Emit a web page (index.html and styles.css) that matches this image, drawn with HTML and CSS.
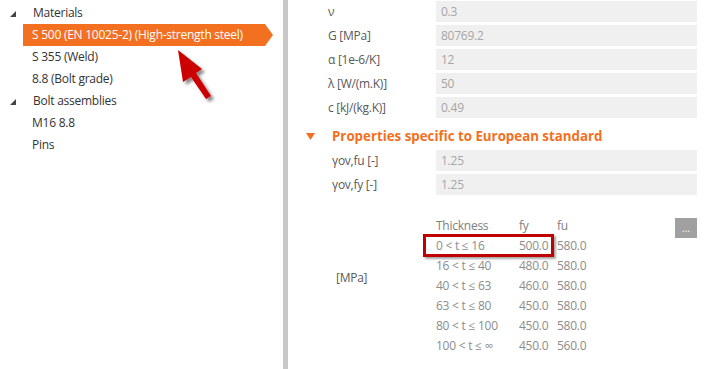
FILE: index.html
```html
<!DOCTYPE html>
<html>
<head>
<meta charset="utf-8">
<link rel="stylesheet" href="styles.css">
</head>
<body>
<div class="app">
  <aside class="tree">
    <div class="node group"><svg class="exp" width="6" height="6" viewBox="0 0 6 6"><polygon points="6,0 6,6 0,6"/></svg><span>Materials</span></div>
    <div class="node child selected"><span>S 500 (EN 10025-2) (High-strength steel)</span></div>
    <div class="node child"><span>S 355 (Weld)</span></div>
    <div class="node child"><span>8.8 (Bolt grade)</span></div>
    <div class="node group"><svg class="exp" width="6" height="6" viewBox="0 0 6 6"><polygon points="6,0 6,6 0,6"/></svg><span>Bolt assemblies</span></div>
    <div class="node child"><span>M16 8.8</span></div>
    <div class="node child"><span>Pins</span></div>
  </aside>
  <div class="divider"></div>
  <main class="props">
    <div class="fields">
      <div class="field"><span class="label">ν</span><span class="value">0.3</span></div>
      <div class="field"><span class="label">G [MPa]</span><span class="value">80769.2</span></div>
      <div class="field"><span class="label">α [1e-6/K]</span><span class="value">12</span></div>
      <div class="field"><span class="label">λ [W/(m.K)]</span><span class="value">50</span></div>
      <div class="field"><span class="label">c [kJ/(kg.K)]</span><span class="value">0.49</span></div>
    </div>
    <div class="section-head">
      <svg class="collapse" width="9" height="7" viewBox="0 0 9 7"><polygon points="0,0 9,0 4.5,7"/></svg>
      <span>Properties specific to European standard</span>
    </div>
    <div class="fields">
      <div class="field"><span class="label sub">γov,fu [-]</span><span class="value">1.25</span></div>
      <div class="field"><span class="label sub">γov,fy [-]</span><span class="value">1.25</span></div>
    </div>
    <div class="table-field">
      <span class="label mpa">[MPa]</span>
      <div class="table-wrap">
        <table class="grid">
          <tr><th>Thickness</th><th>fy</th><th>fu</th></tr>
          <tr><td>0 &lt; t ≤ 16</td><td>500.0</td><td>580.0</td></tr>
          <tr><td>16 &lt; t ≤ 40</td><td>480.0</td><td>580.0</td></tr>
          <tr><td>40 &lt; t ≤ 63</td><td>460.0</td><td>580.0</td></tr>
          <tr><td>63 &lt; t ≤ 80</td><td>450.0</td><td>580.0</td></tr>
          <tr><td>80 &lt; t ≤ 100</td><td>450.0</td><td>580.0</td></tr>
          <tr><td>100 &lt; t ≤ ∞</td><td>450.0</td><td>560.0</td></tr>
        </table>
        <div class="highlight-box"></div>
      </div>
      <button class="more">...</button>
    </div>
  </main>
  <svg class="callout" width="708" height="369" viewBox="0 0 708 369">
    <defs>
      <filter id="sh" x="-50%" y="-50%" width="200%" height="200%">
        <feGaussianBlur in="SourceAlpha" stdDeviation="1.5"/>
        <feOffset dx="3" dy="3" result="b"/>
        <feFlood flood-color="#000" flood-opacity="0.45"/>
        <feComposite in2="b" operator="in"/>
        <feMerge><feMergeNode/><feMergeNode in="SourceGraphic"/></feMerge>
      </filter>
    </defs>
    <polygon filter="url(#sh)" fill="#cc0000" points="178,50 202,69 196,73 211,96 206,99 191,77 183,82"/>
  </svg>
</div>
</body>
</html>
```

FILE: styles.css
```css
* { box-sizing: border-box; }
html, body { margin: 0; padding: 0; background: #fff; }
body {
  font-family: "Open Sans", "Noto Sans", sans-serif;
  font-size: 12px;
  letter-spacing: -0.25px;
  color: #333;
}
.app {
  position: relative;
  display: flex;
  width: 708px;
  height: 369px;
  overflow: hidden;
}
.tree {
  width: 283px;
  flex: none;
  padding-top: 2px;
}
.node {
  height: 22px;
  line-height: 22px;
  display: flex;
  align-items: center;
  white-space: nowrap;
  color: #333;
}
.node.group { padding-left: 10px; }
.node.group .exp { fill: #444; margin-right: 17px; margin-top: 1px; }
.node.child { padding-left: 23px; }
.node.child span { padding-left: 9px; }
.node.selected { width: 273px; }
.node.selected span {
  display: block;
  width: 250px;
  background: #f37021;
  color: #fff;
  clip-path: polygon(0 0, 242px 0, 250px 50%, 242px 100%, 0 100%);
}
.divider {
  width: 5px;
  flex: none;
  background: #c8c8c8;
}
.props {
  flex: 1;
  padding: 1px 11px 0 40px;
  color: #595959;
}
.fields {
  display: flex;
  flex-direction: column;
  gap: 3px;
}
.field {
  display: flex;
  height: 21px;
  align-items: center;
}
.label {
  width: 108px;
  flex: none;
  white-space: nowrap;
}
.label.sub { padding-left: 4px; }
.value {
  flex: 1;
  height: 21px;
  line-height: 21px;
  background: #f0f0f0;
  color: #a6a6a6;
  padding-left: 5px;
}
.section-head {
  display: flex;
  align-items: center;
  height: 24px;
  margin: 6px 0 2px -22px;
  color: #f37021;
  font-weight: 700;
  font-size: 13.3px;
  letter-spacing: 0;
}
.section-head .collapse { fill: #f37021; margin-right: 17px; }
.table-field {
  position: relative;
  display: flex;
  margin-top: 21px;
}
.mpa {
  padding-top: 52px;
  padding-left: 8px;
  line-height: 20px;
}
.table-wrap { position: relative; flex: 1; }
.grid {
  border-collapse: collapse;
  color: #8c8c8c;
}
.grid th, .grid td {
  font-weight: 400;
  text-align: left;
  padding: 0;
  height: 20px;
  line-height: 20px;
  white-space: nowrap;
}
.grid th:nth-child(1), .grid td:nth-child(1) { width: 83px; }
.grid th:nth-child(2), .grid td:nth-child(2) { width: 38px; }
.grid th { color: #808080; }
.highlight-box {
  position: absolute;
  left: -13px;
  top: 18px;
  width: 131px;
  height: 23px;
  border: 3px solid #c00000;
  box-shadow: 2px 2px 2px rgba(0,0,0,0.35);
}
.more {
  position: absolute;
  right: 0;
  top: 2px;
  width: 22px;
  height: 20px;
  border: 0;
  padding: 0;
  background: #a0a0a0;
  color: #fff;
  font-size: 10px;
  line-height: 18px;
  font-family: inherit;
  letter-spacing: 0;
}
.callout {
  position: absolute;
  left: 0;
  top: 0;
  pointer-events: none;
}
```
